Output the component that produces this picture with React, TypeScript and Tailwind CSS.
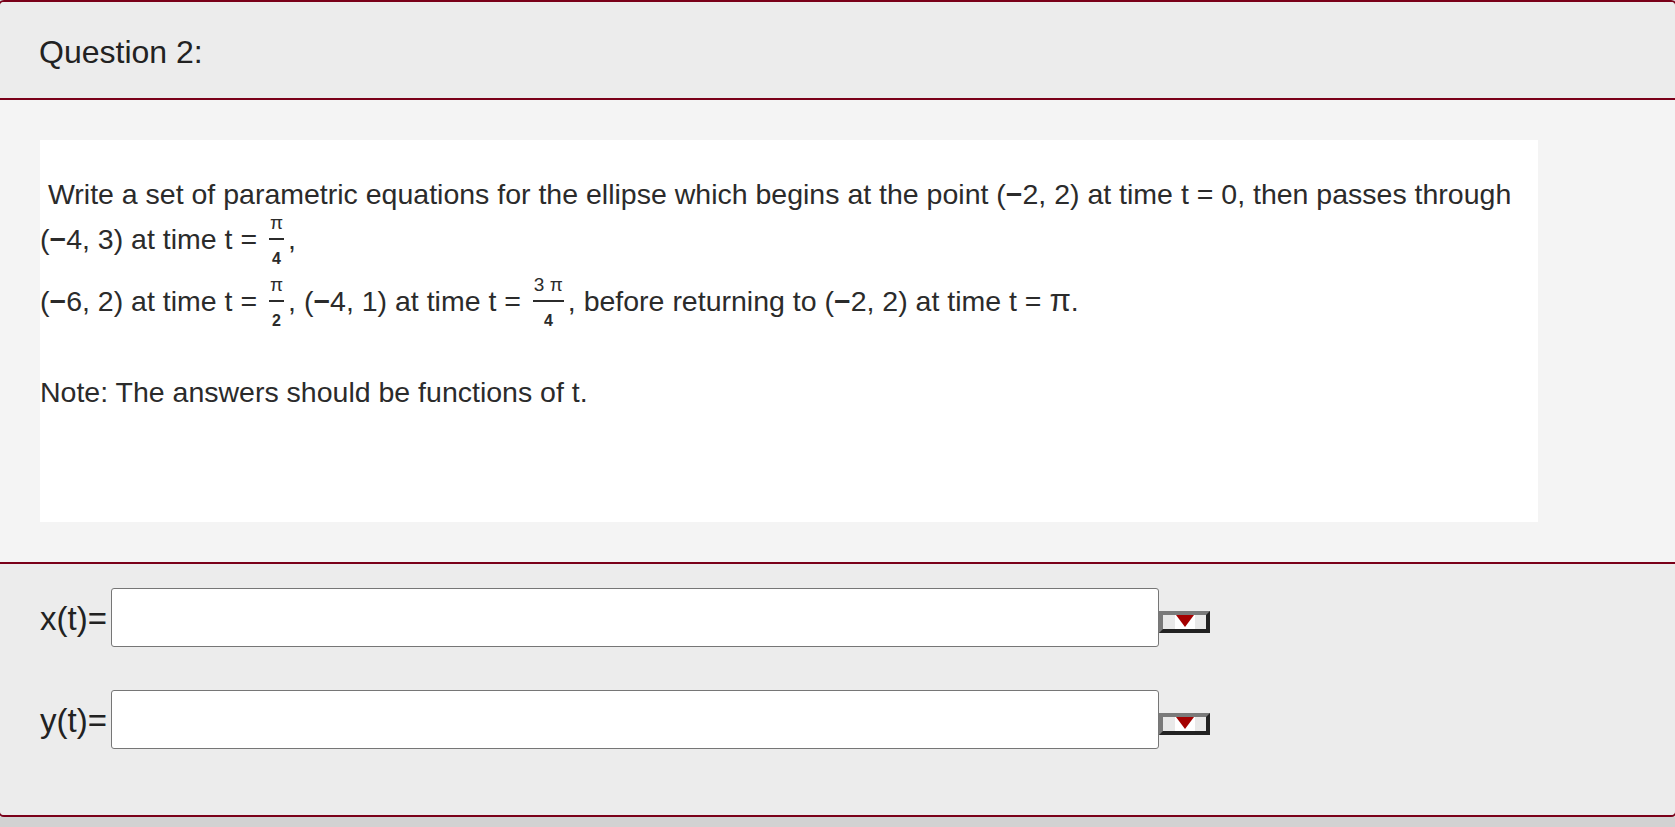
import React from 'react';

const Minus = () => <span className="font-bold">−</span>;

function Frac({ num, den }: { num: string; den: string }) {
  return (
    <span className="mx-[4px] inline-flex flex-col items-center align-middle leading-[16px]">
      <span className="px-[1px] pb-[7px] text-[19px]">{num}</span>
      <span className="h-[2px] w-full bg-[#2b2b2b]" />
      <span className="pt-[11px] text-[16px] font-bold">{den}</span>
    </span>
  );
}

function AnswerRow({ label, first }: { label: string; first?: boolean }) {
  return (
    <div className={`flex items-start ${first ? '' : 'mt-[43px]'}`}>
      <div className="mt-[14px] w-[71px] text-[33px] leading-[33px] text-[#222]">{label}</div>
      <input
        type="text"
        className="h-[59px] w-[1048px] rounded-[3px] border-[1.5px] border-[#767676] bg-white px-2 text-[24px] outline-none"
      />
      <div className="mt-[23px] flex h-[22px] w-[51px] justify-center border-t-[4px] border-l-[4px] border-r-[4px] border-b-[4px] border-t-[#7a7a7a] border-l-[#7a7a7a] border-r-[#222] border-b-[#222] bg-[#e9e9e9]">
        <svg width="20" height="14" viewBox="0 0 20 14">
          <rect width="20" height="14" fill="#ffffff" />
          <path d="M1 0 H19 L10 12 Z" fill="#a40000" />
        </svg>
      </div>
    </div>
  );
}

export default function App() {
  return (
    <div className="min-h-screen overflow-hidden bg-[#d2d2d2] font-['Liberation_Sans',Arial,sans-serif]">
      <div className="-mx-[2px] overflow-hidden rounded-[6px] border-2 border-[#7a0019]">
        <div className="h-[98px] border-b-2 border-[#7a0019] bg-[#ececec] pl-[39px] pt-[34px]">
          <div className="text-[32px] leading-[32px] text-[#222]">Question 2:</div>
        </div>

        <div className="border-b-2 border-[#7a0019] bg-[#f4f4f4] p-[40px]">
          <div className="h-[382px] w-[1498px] bg-white pt-[38px] text-[28.5px] leading-[32px] text-[#2b2b2b]">
            <div className="whitespace-nowrap">
              &nbsp;Write a set of parametric equations for the ellipse which begins at the point (<Minus />2, 2) at time t = 0, then passes through
            </div>
            <div className="mt-[5px] whitespace-nowrap">
              (<Minus />4, 3) at time t = <Frac num="π" den="4" />,
            </div>
            <div className="mt-[10px] whitespace-nowrap">
              (<Minus />6, 2) at time t = <Frac num="π" den="2" />, (<Minus />4, 1) at time t ={' '}
              <Frac num="3 π" den="4" />, before returning to (<Minus />2, 2) at time t = <span className="text-[31px]">π</span>.
            </div>
            <div className="mt-[47px] whitespace-nowrap">Note: The answers should be functions of t.</div>
          </div>
        </div>

        <div className="h-[251px] bg-[#ececec] pl-[40px] pt-[24px]">
          <AnswerRow label="x(t)=" first />
          <AnswerRow label="y(t)=" />
        </div>
      </div>
    </div>
  );
}
